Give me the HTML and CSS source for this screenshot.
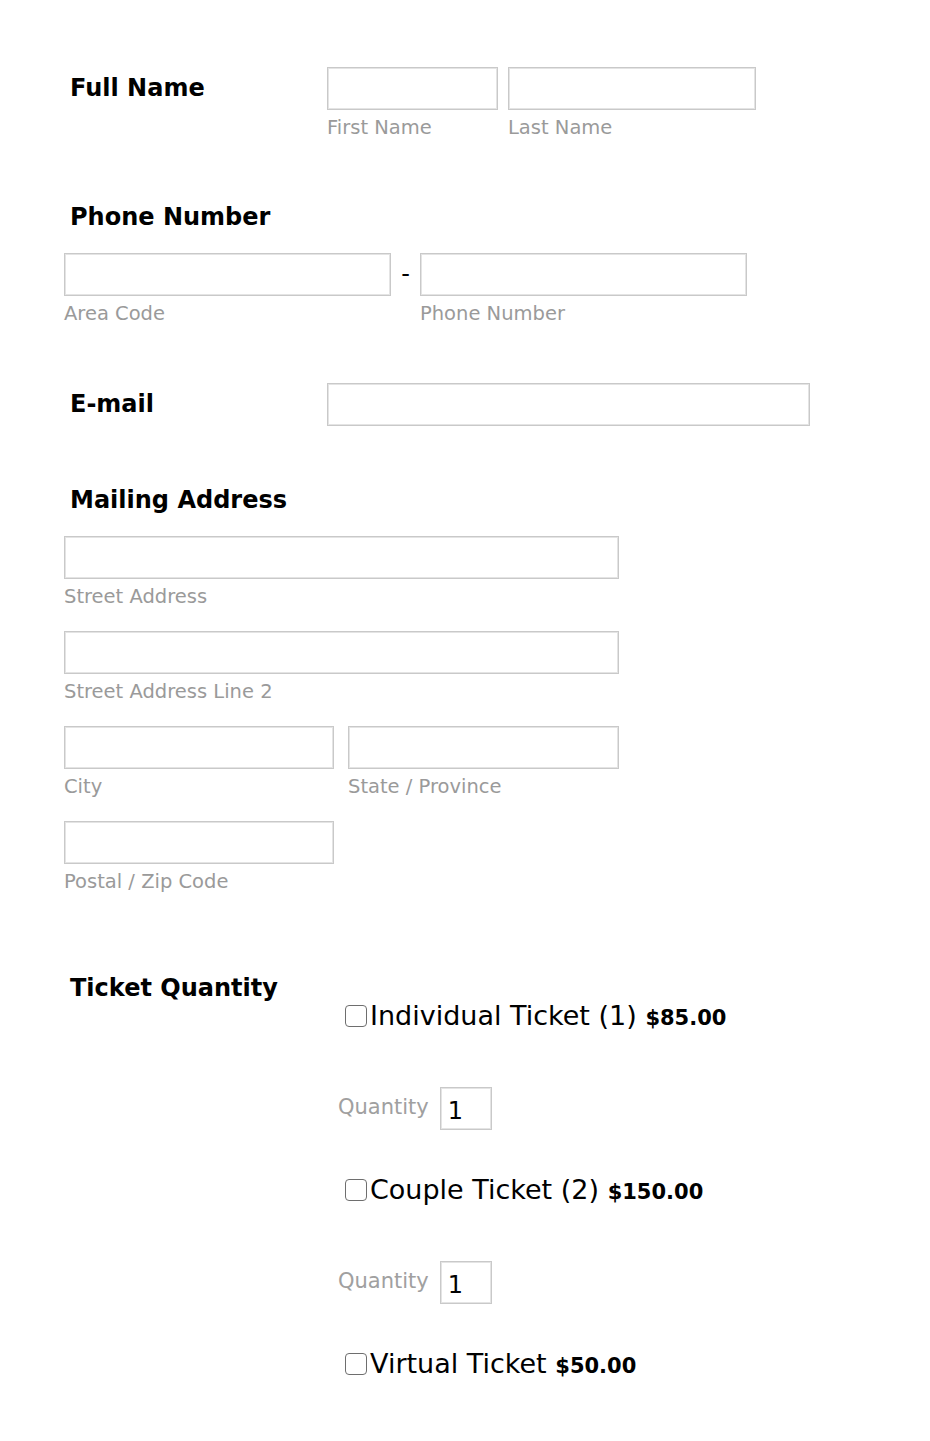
FILE: index.html
```html
<!DOCTYPE html>
<html>
<head>
<meta charset="utf-8">
<link rel="stylesheet" href="styles.css">
</head>
<body>
<form class="form">
  <div class="row-inline first">
    <label class="label side">Full Name</label>
    <div class="controls">
      <div class="sub w171"><input class="box" type="text"><span class="sublabel">First Name</span></div>
      <div class="sub w248"><input class="box" type="text"><span class="sublabel">Last Name</span></div>
    </div>
  </div>

  <div class="row-top phone">
    <label class="label">Phone Number</label>
    <div class="controls">
      <div class="sub w327"><input class="box" type="text"><span class="sublabel">Area Code</span></div>
      <span class="dash">-</span>
      <div class="sub w327"><input class="box" type="text"><span class="sublabel">Phone Number</span></div>
    </div>
  </div>

  <div class="row-inline email">
    <label class="label side">E-mail</label>
    <div class="controls">
      <input class="box w483" type="text">
    </div>
  </div>

  <div class="row-top address">
    <label class="label">Mailing Address</label>
    <div class="addr">
      <div class="sub w555"><input class="box" type="text"><span class="sublabel">Street Address</span></div>
      <div class="sub w555"><input class="box" type="text"><span class="sublabel">Street Address Line 2</span></div>
      <div class="controls gap14">
        <div class="sub w270"><input class="box" type="text"><span class="sublabel">City</span></div>
        <div class="sub w271"><input class="box" type="text"><span class="sublabel">State / Province</span></div>
      </div>
      <div class="sub w270"><input class="box" type="text"><span class="sublabel">Postal / Zip Code</span></div>
    </div>
  </div>

  <div class="row-tickets">
    <label class="label side-t">Ticket Quantity</label>
    <div class="products">
      <div class="product">
        <label class="option"><input class="check" type="checkbox"><span class="opt-name">Individual Ticket (1)</span> <b class="price">$85.00</b></label>
        <div class="qty"><span class="qty-label">Quantity</span><input class="qty-box" type="text" value="1"></div>
      </div>
      <div class="product">
        <label class="option"><input class="check" type="checkbox"><span class="opt-name">Couple Ticket (2)</span> <b class="price">$150.00</b></label>
        <div class="qty"><span class="qty-label">Quantity</span><input class="qty-box" type="text" value="1"></div>
      </div>
      <div class="product">
        <label class="option"><input class="check" type="checkbox"><span class="opt-name">Virtual Ticket</span> <b class="price">$50.00</b></label>
      </div>
    </div>
  </div>
</form>
</body>
</html>
```

FILE: styles.css
```css
html, body {
  margin: 0;
  padding: 0;
  background: #fff;
}
body {
  font-family: "DejaVu Sans", Verdana, sans-serif;
  color: #000;
}
.form {
  padding: 67px 0 40px 64px;
}
.label {
  display: block;
  font-weight: bold;
  font-size: 24px;
  line-height: 30px;
  padding-left: 6px;
  color: #000;
}
.row-inline {
  display: flex;
  align-items: flex-start;
}
.label.side {
  width: 257px;
  line-height: 43px;
  flex: none;
}
.controls {
  display: flex;
  align-items: flex-start;
  gap: 10px;
}
.controls.gap14 {
  gap: 14px;
}
.sub {
  display: flex;
  flex-direction: column;
}
.box {
  box-sizing: border-box;
  height: 43px;
  width: 100%;
  margin: 0;
  border: 1px solid #c9c9c9;
  box-shadow: inset 0 0 0 1px #e4e4e4;
  background: #fff;
  border-radius: 0;
  padding: 0 6px;
  font: inherit;
}
.sublabel {
  margin-top: 7px;
  font-size: 19.5px;
  line-height: 22px;
  color: #9a9a9a;
  white-space: nowrap;
}
.w171 { width: 171px; }
.w248 { width: 248px; }
.w327 { width: 327px; }
.w483 { width: 483px; }
.w555 { width: 555px; }
.w270 { width: 270px; }
.w271 { width: 271px; }

.phone {
  margin-top: 63px;
}
.row-top .label {
  margin-bottom: 21px;
}
.phone .controls {
  gap: 0;
}
.dash {
  width: 29px;
  text-align: center;
  font-size: 24px;
  line-height: 43px;
}
.email {
  margin-top: 58px;
}
.address {
  margin-top: 59px;
}
.addr {
  display: flex;
  flex-direction: column;
  gap: 23px;
}
.row-tickets {
  margin-top: 80px;
  display: flex;
  align-items: flex-start;
}
.label.side-t {
  width: 268px;
  flex: none;
}
.products {
  padding-top: 28px;
  display: flex;
  flex-direction: column;
}
.product {
  display: flex;
  flex-direction: column;
}
.option {
  display: block;
  height: 30px;
  line-height: 30px;
  padding-left: 6px;
  font-size: 27px;
  white-space: nowrap;
}
.check {
  appearance: none;
  -webkit-appearance: none;
  box-sizing: border-box;
  display: inline-block;
  vertical-align: -2px;
  width: 22px;
  height: 22px;
  margin: 0 3px 0 1px;
  border: 1.5px solid #6e6e6e;
  border-radius: 4px;
  background: #fff;
}
.price {
  font-size: 21px;
  font-weight: bold;
}
.qty {
  display: flex;
  align-items: center;
  gap: 11px;
  margin-top: 56px;
  margin-bottom: 45px;
}
.qty-label {
  font-size: 21px;
  line-height: 24px;
  padding-bottom: 3px;
  color: #a0a0a0;
}
.qty-box {
  box-sizing: border-box;
  width: 52px;
  height: 43px;
  margin: 0;
  border: 1px solid #c9c9c9;
  box-shadow: inset 0 0 0 1px #e4e4e4;
  padding: 4px 0 0 7px;
  font-family: "DejaVu Sans", Verdana, sans-serif;
  font-size: 24px;
  color: #000;
}
```
